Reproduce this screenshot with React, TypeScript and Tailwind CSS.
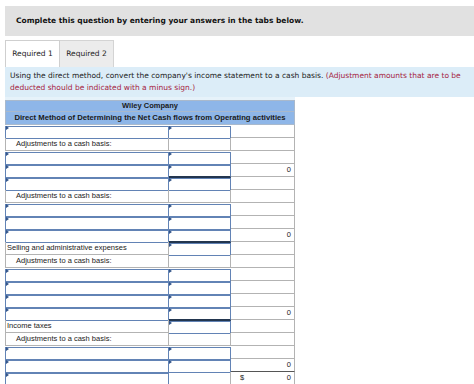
type Cell = "input" | "inputDark" | "plain";

type Row = {
  c1: "input" | "adj" | "label";
  label?: string;
  c2: Cell;
  c3?: string;
  c3Dark?: boolean;
};

const rows: Row[] = [
  { c1: "input", c2: "input" },
  { c1: "adj", c2: "plain" },
  { c1: "input", c2: "input" },
  { c1: "input", c2: "inputDark", c3: "0" },
  { c1: "input", c2: "input" },
  { c1: "adj", c2: "plain" },
  { c1: "input", c2: "input" },
  { c1: "input", c2: "input" },
  { c1: "input", c2: "inputDark", c3: "0" },
  { c1: "label", label: "Selling and administrative expenses", c2: "input" },
  { c1: "adj", c2: "plain" },
  { c1: "input", c2: "input" },
  { c1: "input", c2: "input" },
  { c1: "input", c2: "input" },
  { c1: "input", c2: "inputDark", c3: "0" },
  { c1: "label", label: "Income taxes", c2: "input" },
  { c1: "adj", c2: "plain" },
  { c1: "input", c2: "input" },
  { c1: "input", c2: "input", c3: "0", c3Dark: true },
  { c1: "input", c2: "plain", c3: "$" },
];

function Marker() {
  return (
    <span className="block w-0 h-0 mt-px border-l-[3px] border-l-[#34568a] border-y-[2px] border-y-transparent" />
  );
}

function InputBox({ dark, first }: { dark?: boolean; first?: boolean }) {
  return (
    <div
      className={`h-full border-r border-b border-r-[#6283b5] shadow-[inset_0_1px_0_#6283b5] ${
        first ? "border-l border-l-[#6283b5]" : ""
      } ${dark ? "border-b-2 border-b-[#23364f]" : "border-b-[#6283b5]"}`}
    >
      <Marker />
    </div>
  );
}

function TableRow({ row }: { row: Row }) {
  return (
    <div className="flex h-[13px] text-[7.5px] leading-[12px] text-[#222]">
      <div className="w-[164px] shrink-0">
        {row.c1 === "input" ? (
          <InputBox first />
        ) : (
          <div
            className={`h-full border-l border-r border-b border-[#b3b3b3] ${
              row.c1 === "adj" ? "pl-[10px]" : "pl-px"
            }`}
          >
            {row.c1 === "adj" ? "Adjustments to a cash basis:" : row.label}
          </div>
        )}
      </div>
      <div className="w-[62px] shrink-0">
        {row.c2 === "plain" ? (
          <div className="h-full border-r border-b border-[#b3b3b3]" />
        ) : (
          <InputBox dark={row.c2 === "inputDark"} />
        )}
      </div>
      <div
        className={`w-[64px] shrink-0 h-full border-r border-b border-[#b3b3b3] flex justify-between pr-[3px] ${
          row.c3Dark ? "border-b-[#555]" : ""
        }`}
      >
        {row.c3 === "$" ? (
          <>
            <span className="pl-[9px]">$</span>
            <span>0</span>
          </>
        ) : (
          <>
            <span />
            <span>{row.c3}</span>
          </>
        )}
      </div>
    </div>
  );
}

export default function App() {
  return (
    <div className="w-[474px] h-[384px] overflow-hidden bg-white pt-[6px] pl-[5px] font-['DejaVu_Sans',sans-serif]">
      <div className="h-[30px] bg-[#e1e1e1] flex items-center pl-[11px]">
        <span className="text-[7.5px] font-bold text-[#111]">
          Complete this question by entering your answers in the tabs below.
        </span>
      </div>

      <div className="flex mt-[4px] h-[27px]">
        <div className="w-[55px] bg-white border border-b-0 border-[#cfcfcf] flex items-center justify-center text-[7.5px] text-[#222]">
          Required 1
        </div>
        <div className="w-[54px] bg-[#ececec] border border-l-0 border-b-0 border-[#d4d4d4] flex items-center justify-center text-[7.5px] text-[#222]">
          Required 2
        </div>
      </div>

      <div className="h-[30px] bg-[#dcedf8] pl-[5px] pt-[3px] text-[7.5px] leading-[12px] text-[#222] whitespace-nowrap">
        <div>
          Using the direct method, convert the company's income statement to a cash basis.{" "}
          <span className="text-[#a5233f]">(Adjustment amounts that are to be</span>
        </div>
        <div className="text-[#a5233f]">deducted should be indicated with a minus sign.)</div>
      </div>

      <div className="w-[290px] h-[3px] bg-[#e6f2fa]" />

      <div className="w-[290px] font-['Liberation_Sans',Arial,sans-serif]">
        <div className="h-[12px] bg-[#8eb6e8] border border-[#a9b9cc] text-center text-[7.5px] leading-[10px] font-bold text-[#1a1a1a]">
          Wiley Company
        </div>
        <div className="h-[13px] bg-[#8eb6e8] border border-t-0 border-[#a9b9cc] text-center text-[7.7px] leading-[12px] font-bold text-[#1a1a1a]">
          Direct Method of Determining the Net Cash flows from Operating activities
        </div>
        {rows.map((row, i) => (
          <TableRow key={i} row={row} />
        ))}
      </div>
    </div>
  );
}
